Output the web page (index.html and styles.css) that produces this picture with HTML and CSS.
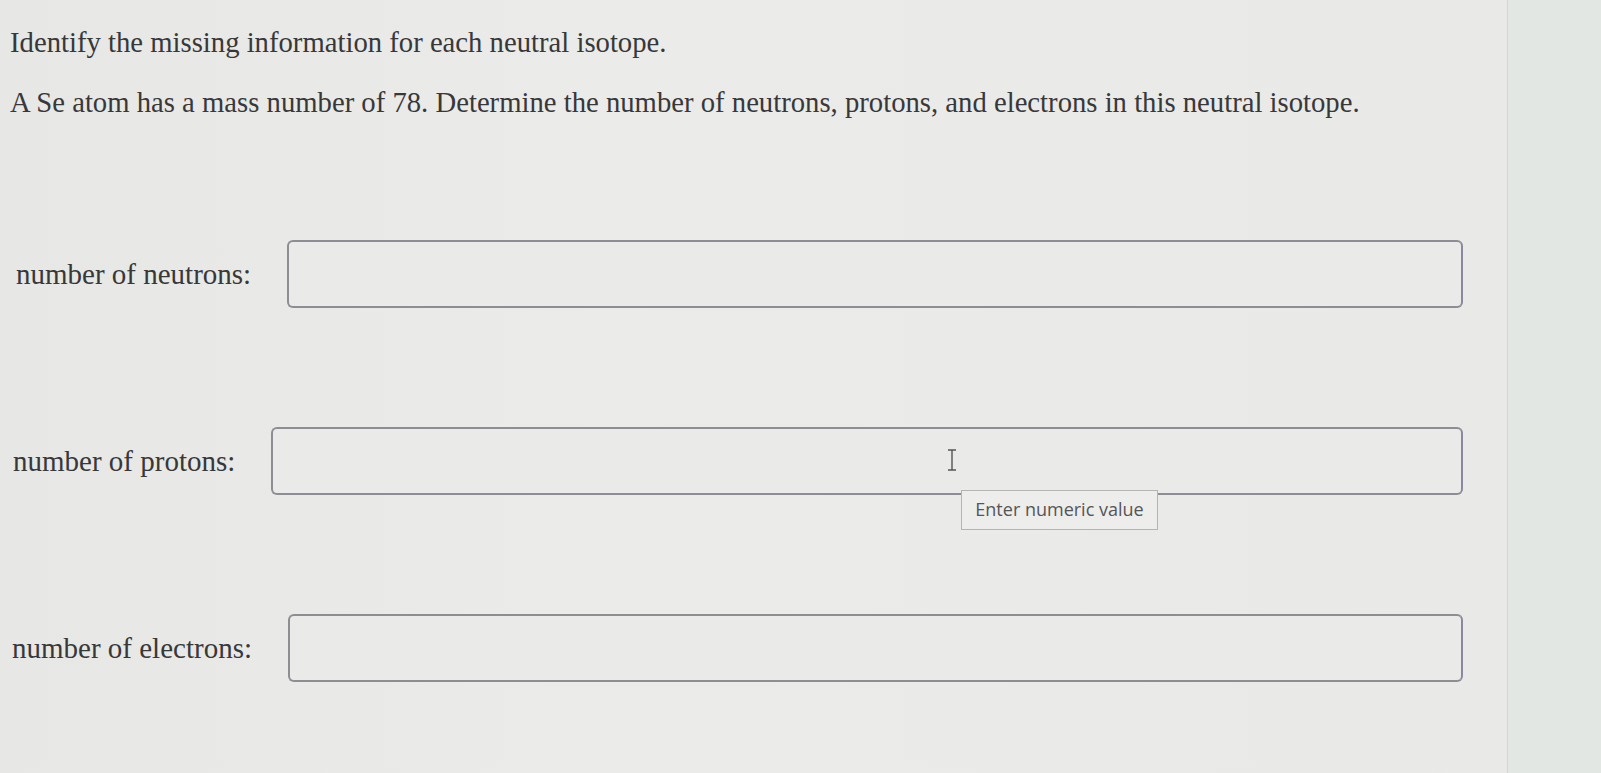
FILE: index.html
```html
<!DOCTYPE html>
<html>
<head>
<meta charset="utf-8">
<link rel="stylesheet" href="styles.css">
</head>
<body>
<div class="page">
  <main class="content">
    <p class="q-title">Identify the missing information for each neutral isotope.</p>
    <p class="q-text">A Se atom has a mass number of 78. Determine the number of neutrons, protons, and electrons in this neutral isotope.</p>
    <div class="rows">
      <div class="row row-1">
        <label class="label">number of neutrons:</label>
        <div class="input"></div>
      </div>
      <div class="row row-2">
        <label class="label">number of protons:</label>
        <div class="input input-active">
          <svg class="ibeam" width="10" height="22" viewBox="0 0 10 22"><path d="M1 1h8M1 21h8M5 1v20" stroke="#555" stroke-width="1.4" fill="none"/></svg>
          <div class="tooltip">Enter numeric value</div>
        </div>
      </div>
      <div class="row row-3">
        <label class="label">number of electrons:</label>
        <div class="input"></div>
      </div>
    </div>
  </main>
  <aside class="side"></aside>
</div>
</body>
</html>
```

FILE: styles.css
```css
html, body {
  margin: 0;
  padding: 0;
  height: 100%;
}
body {
  background: #e8e8e6;
  font-family: "Liberation Serif", "Times New Roman", serif;
  color: #38383a;
  overflow: hidden;
}
.page {
  display: flex;
  height: 773px;
}
.content {
  width: 1508px;
  box-sizing: border-box;
  padding: 25px 44px 0 10px;
  border-right: 1px solid #d2d6d2;
  background: linear-gradient(90deg, #e7e7e5 0%, #ebebe9 40%, #e9e9e7 100%);
}
.side {
  flex: 1;
  background: #e3e7e3;
}
.q-title {
  margin: 0;
  font-size: 28.7px;
  line-height: 34px;
}
.q-text {
  margin: 26px 0 0 0;
  font-size: 28.7px;
  line-height: 34px;
}
.rows {
  display: flex;
  flex-direction: column;
  margin-top: 121px;
  gap: 119px;
}
.row {
  display: flex;
  align-items: center;
  gap: 36px;
}
.row-1 { padding-left: 6px; }
.row-2 { padding-left: 3px; }
.row-3 { padding-left: 2px; }
.label {
  font-size: 29px;
  white-space: nowrap;
}
.input {
  position: relative;
  flex: 1;
  height: 64px;
  border: 2px solid #8d8d93;
  border-right-color: #8a88a0;
  border-radius: 6px;
  background: #eaeae8;
}
.ibeam {
  position: absolute;
  left: 674px;
  top: 20px;
}
.tooltip {
  position: absolute;
  left: 688px;
  top: 61px;
  padding: 6px 13px 7px 13px;
  font-family: "Open Sans", "Noto Sans", sans-serif;
  font-size: 18px;
  line-height: 25px;
  color: #555558;
  background: #ededeb;
  border: 1.5px solid #b4b4b4;
  white-space: nowrap;
}
```
